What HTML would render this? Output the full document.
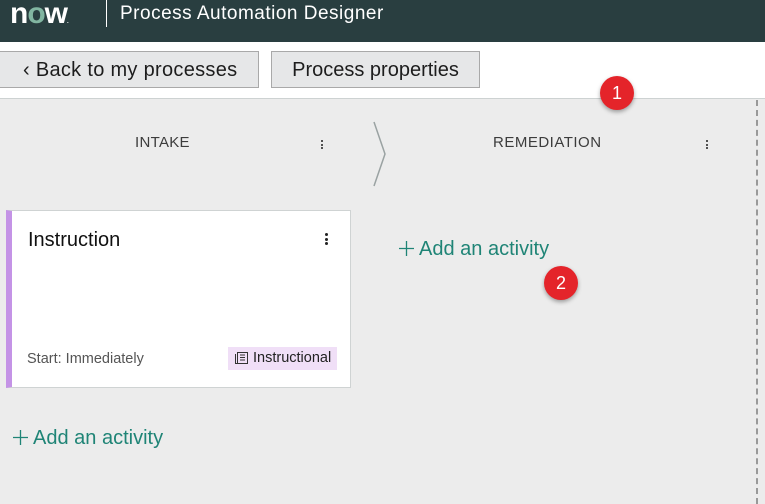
<!DOCTYPE html><html><head><style>
body{margin:0;width:765px;height:504px;overflow:hidden;background:#ececec;font-family:"Liberation Sans",sans-serif;position:relative}
.a{position:absolute}
.hdr{left:0;top:0;width:765px;height:42px;background:#293e40}
.btn{top:51px;height:37px;background:#e6e7e8;border:1px solid #a9a9a9;font-size:20px;color:#1d1d1d;line-height:37px;box-sizing:border-box}
.dots{width:3px}
.dots i{display:block;width:3px;height:3px;border-radius:50%;background:#222;margin-bottom:1.5px}
.badge{width:34px;height:34px;border-radius:50%;background:#e4242a;color:#fff;font-size:18px;text-align:center;line-height:34px;box-shadow:0 2px 4px rgba(0,0,0,.35)}
.add{color:#1f8476;font-size:20px}
</style></head><body>
<div class="a hdr"></div>
<div class="a" style="left:10px;top:-3px;color:#fff;font-size:30px;font-weight:bold;letter-spacing:-1px">n<span style="color:#81b5a1">o</span>w<span style="font-size:6px">.</span></div>
<div class="a" style="left:106px;top:0;width:1px;height:27px;background:#fff"></div>
<div class="a" style="left:120px;top:3px;color:#fff;font-size:19px;letter-spacing:0.5px">Process Automation Designer</div>
<div class="a" style="left:0;top:42px;width:765px;height:56px;background:#fff;border-bottom:1px solid #cdd2d2"></div>
<div class="a btn" style="left:-2px;width:261px;padding-left:24px;letter-spacing:0.3px">‹ Back to my processes</div>
<div class="a btn" style="left:271px;width:209px;text-align:center">Process properties</div>
<div class="a" style="left:135px;top:134px;font-size:15px;color:#3c3c3c;letter-spacing:0.3px">INTAKE</div>
<div class="a" style="left:493px;top:134px;font-size:15px;color:#3c3c3c;letter-spacing:0.5px">REMEDIATION</div>
<div class="a dots" style="left:321px;top:140px"><i style="width:2px;height:2px"></i><i style="width:2px;height:2px"></i><i style="width:2px;height:2px"></i></div>
<div class="a dots" style="left:706px;top:140px"><i style="width:2px;height:2px"></i><i style="width:2px;height:2px"></i><i style="width:2px;height:2px"></i></div>
<svg class="a" style="left:370px;top:118px" width="20" height="72"><path d="M4 4 L15 36 L4 68" stroke="#9aa2a2" stroke-width="1.5" fill="none"/></svg>
<div class="a" style="left:756px;top:100px;height:404px;border-left:2px dashed #999"></div>
<div class="a" style="left:6px;top:210px;width:345px;height:178px;background:#fff;border:1px solid #cfd3d3;box-sizing:border-box;border-left:6px solid #c493e6"></div>
<div class="a" style="left:28px;top:229px;font-size:20px;color:#111">Instruction</div>
<div class="a dots" style="left:325px;top:233px"><i></i><i></i><i></i></div>
<div class="a" style="left:27px;top:351px;font-size:14.5px;color:#555">Start: Immediately</div>
<div class="a" style="left:228px;top:347px;width:109px;height:23px;background:#f0dff7;font-size:14.5px;color:#222;line-height:23px;padding-left:25px;box-sizing:border-box">Instructional</div>
<svg class="a" style="left:235px;top:352px" width="13" height="12"><rect x="2.5" y="0.5" width="10" height="11" fill="none" stroke="#333"/><path d="M0.5 2v9.5h2M5 3h5M5 5.5h5M5 8h5" stroke="#333" fill="none"/></svg>
<svg class="a" style="left:398px;top:240px" width="17" height="17"><path d="M8.5 1v15M1 8.5h15" stroke="#1f8476" stroke-width="1.3"/></svg>
<div class="a add" style="left:419px;top:238px">Add an activity</div>
<svg class="a" style="left:12px;top:429px" width="17" height="17"><path d="M8.5 1v15M1 8.5h15" stroke="#1f8476" stroke-width="1.3"/></svg>
<div class="a add" style="left:33px;top:427px">Add an activity</div>
<div class="a badge" style="left:600px;top:76px">1</div>
<div class="a badge" style="left:544px;top:266px">2</div>
</body></html>
